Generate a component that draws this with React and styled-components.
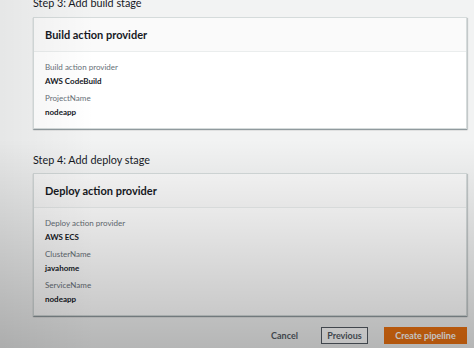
import React from "react";
import styled, { createGlobalStyle } from "styled-components";

const Global = createGlobalStyle`
  html, body { margin: 0; padding: 0; }
  body {
    width: 474px;
    height: 348px;
    overflow: hidden;
    background: #f2f3f3;
    font-family: "Lato", "Open Sans", sans-serif;
    color: #16191f;
  }
`;

const Page = styled.div`
  position: relative;
  width: 474px;
  height: 348px;
  overflow: hidden;
  padding: 0 7px 0 33px;
  box-sizing: border-box;
  display: flex;
  flex-direction: column;
`;

const Vignette = styled.div`
  position: absolute;
  inset: 0;
  pointer-events: none;
  background:
    linear-gradient(to bottom, rgba(0,0,0,0) 40%, rgba(0,0,0,0.25) 100%),
    linear-gradient(to right, rgba(0,0,0,0.05) 0%, rgba(0,0,0,0) 20%);
`;

const StepTitle = styled.h2`
  margin: ${(p) => p.$mt}px 0 0 0;
  font-size: 10.8px;
  font-weight: 400;
  line-height: 14px;
  color: #16191f;
`;

const Card = styled.section`
  margin-top: ${(p) => p.$mt}px;
  background: #fff;
  border: 1px solid #d5dbdb;
  box-shadow: 0 1px 1px 0 rgba(0, 28, 36, 0.3), 1px 1px 1px 0 rgba(0, 28, 36, 0.15);
  display: flex;
  flex-direction: column;
`;

const CardHeader = styled.header`
  height: 33px;
  display: flex;
  align-items: center;
  padding-left: 11px;
  background: #fafafa;
  border-bottom: 1px solid #eaeded;
  font-size: 11px;
  font-weight: 700;
`;

const CardBody = styled.div`
  padding: 8px 11px 9px;
  display: flex;
  flex-direction: column;
  gap: 3px;
`;

const Field = styled.div`
  display: flex;
  flex-direction: column;
`;

const Label = styled.div`
  font-size: 8px;
  line-height: 14px;
  color: #687078;
`;

const Value = styled.div`
  font-size: 8px;
  line-height: 14px;
  font-weight: 700;
  color: #16191f;
`;

const Actions = styled.div`
  margin-top: 11px;
  display: flex;
  justify-content: flex-end;
  align-items: center;
`;

const TextButton = styled.button`
  background: none;
  border: none;
  font-family: inherit;
  font-size: 9px;
  font-weight: 700;
  color: #545b64;
  padding: 0;
  margin-right: 23px;
`;

const Button = styled.button`
  height: 17px;
  box-sizing: border-box;
  font-family: inherit;
  font-size: 9px;
  font-weight: 700;
  padding: 0;
  width: ${(p) => p.$w}px;
  margin-left: ${(p) => p.$ml}px;
  border: 1px solid ${(p) => (p.$primary ? "#ec7211" : "#545b64")};
  background: ${(p) => (p.$primary ? "#ec7211" : "#ffffff")};
  color: ${(p) => (p.$primary ? "#ffffff" : "#545b64")};
`;

const fields = (list) =>
  list.map(([l, v]) => (
    <Field key={l}>
      <Label>{l}</Label>
      <Value>{v}</Value>
    </Field>
  ));

export default function App() {
  return (
    <>
      <Global />
      <Page>
        <StepTitle $mt={-4}>Step 3: Add build stage</StepTitle>
        <Card $mt={7}>
          <CardHeader>Build action provider</CardHeader>
          <CardBody>
            {fields([
              ["Build action provider", "AWS CodeBuild"],
              ["ProjectName", "nodeapp"],
            ])}
          </CardBody>
        </Card>
        <StepTitle $mt={24}>Step 4: Add deploy stage</StepTitle>
        <Card $mt={6}>
          <CardHeader>Deploy action provider</CardHeader>
          <CardBody>
            {fields([
              ["Deploy action provider", "AWS ECS"],
              ["ClusterName", "javahome"],
              ["ServiceName", "nodeapp"],
            ])}
          </CardBody>
        </Card>
        <Actions>
          <TextButton>Cancel</TextButton>
          <Button $w={47}>Previous</Button>
          <Button $primary $w={83} $ml={16}>Create pipeline</Button>
        </Actions>
        <Vignette />
      </Page>
    </>
  );
}
